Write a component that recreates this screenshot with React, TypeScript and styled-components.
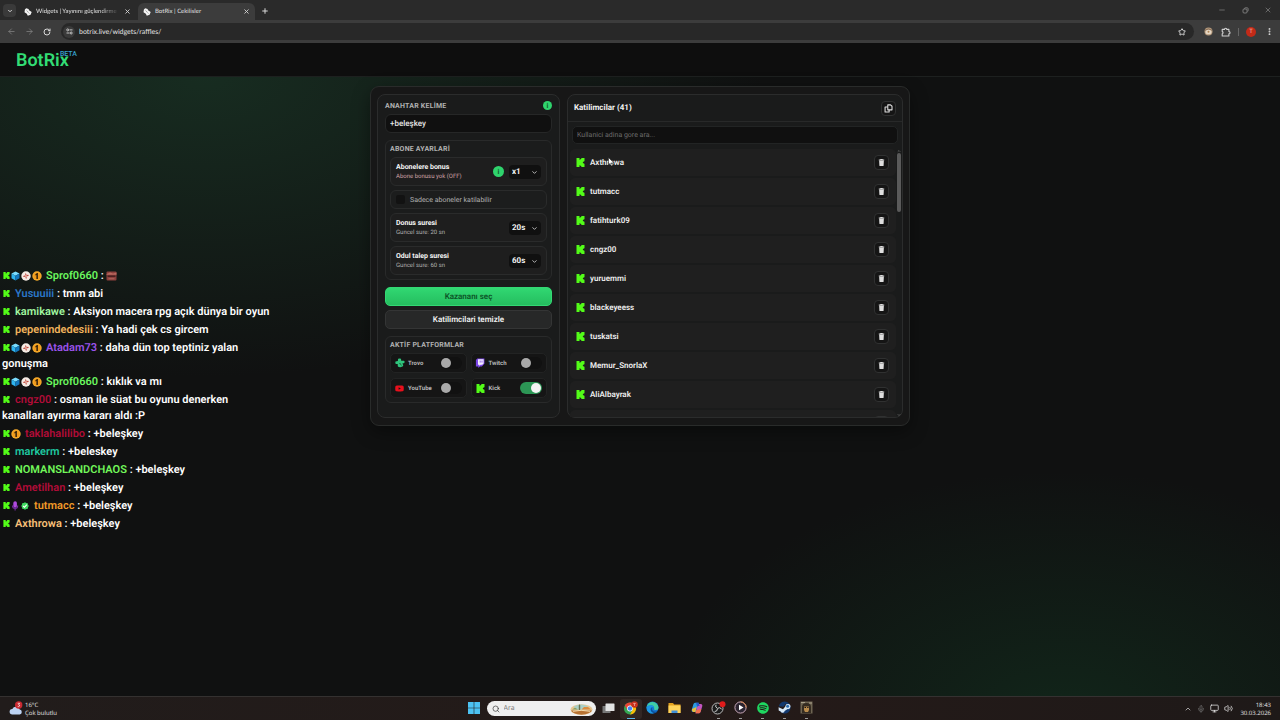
import React from "react";
import styled, { createGlobalStyle, css } from "styled-components";
import {
  ArrowLeft, ArrowRight, RotateCw, Star, EllipsisVertical, X, Plus, Minus,
  ChevronDown, ChevronUp, Search, Monitor, Volume2, Mic,
} from "lucide-react";
import { FaSpotify, FaYoutube } from "react-icons/fa";

const GlobalStyle = createGlobalStyle`
  * { box-sizing: border-box; }
  body {
    margin: 0;
    background: #0f0f0f;
    color: #ececec;
    font-family: Roboto, "Liberation Sans", sans-serif;
    text-rendering: geometricPrecision;
  }
  button, input, select { font-family: inherit; text-rendering: inherit; }
  svg { display: block; flex: none; }
`;

const Screen = styled.div`
  min-height: 100vh;
  display: flex;
  flex-direction: column;
  overflow: hidden;
`;

const iconButton = css`
  display: flex;
  align-items: center;
  justify-content: center;
  padding: 0;
  border: 0;
  background: none;
  color: inherit;
`;

/* ---------- Browser ---------- */

const Browser = styled.header`
  font-family: Lato, "Open Sans", sans-serif;
  background: #2a2a2a;
  color: #d8d8d8;
`;

const TabStrip = styled.div`
  display: flex;
  align-items: flex-end;
  height: 20px;
  padding-left: 3px;
`;

const TabSearch = styled.button`
  ${iconButton}
  width: 13px;
  height: 13px;
  margin-bottom: 3px;
  border-radius: 4px;
  background: #3a3a3a;
`;

const Tab = styled.div<{ $active?: boolean }>`
  display: flex;
  align-items: center;
  gap: 4px;
  width: 117px;
  height: 17px;
  padding: 0 5px;
  border-radius: 6px 6px 0 0;
  background: ${(p) => (p.$active ? "#3c3c3c" : "transparent")};
  margin-left: ${(p) => (p.$active ? "2px" : "3px")};
`;

const TabTitle = styled.span<{ $fade?: boolean }>`
  flex: 1;
  overflow: hidden;
  white-space: nowrap;
  font-size: 6px;
  font-weight: 500;
  line-height: 12px;
  ${(p) => p.$fade && "mask-image: linear-gradient(90deg, #000 75%, transparent);"}
`;

const PlainButton = styled.button<{ $size?: number; $dim?: boolean }>`
  ${iconButton}
  width: ${(p) => p.$size ?? 12}px;
  height: ${(p) => p.$size ?? 12}px;
  opacity: ${(p) => (p.$dim ? 0.45 : 1)};
`;

const NewTab = styled(PlainButton)`
  margin: 0 0 3px 4px;
`;

const WindowControls = styled.div`
  display: flex;
  align-self: center;
  gap: 11px;
  margin-left: auto;
  padding-right: 6px;
  color: #8a8a8a;
`;

const Toolbar = styled.div`
  display: flex;
  align-items: center;
  gap: 6px;
  height: 23px;
  padding: 0 5px;
  background: #3c3c3c;
`;

const AddressBar = styled.form`
  flex: 1;
  display: flex;
  align-items: center;
  gap: 4px;
  height: 17px;
  margin: 0 2px;
  padding: 0 6px 0 2px;
  border-radius: 9px;
  background: #282828;
`;

const SiteInfo = styled(PlainButton)`
  border-radius: 50%;
  background: #3a3a3a;
`;

const Address = styled.input`
  flex: 1;
  padding: 0;
  border: 0;
  background: none;
  color: #e2e2e2;
  font-size: 7px;
  line-height: 12px;
  outline: 0;
`;

const ToolbarRule = styled.span`
  width: 1px;
  height: 8px;
  background: #666;
`;

const Avatar = styled.button`
  ${iconButton}
  width: 10px;
  height: 10px;
  margin: 0 1px;
  border-radius: 50%;
  background: #c32a18;
  color: #f0b0a0;
  font-size: 6px;
`;

/* ---------- Site ---------- */

const SiteHeader = styled.div`
  height: 34px;
  padding: 7px 16px 0;
  border-bottom: 1px solid #1d201f;
  background: #0e0e0e;
`;

const Brand = styled.a`
  display: inline-flex;
  align-items: flex-start;
  color: #32dc74;
  font-size: 18px;
  font-weight: 600;
  line-height: 22px;
  text-decoration: none;
`;

const Beta = styled.sup`
  margin-left: -9px;
  color: #36a0cc;
  font-size: 7px;
  font-weight: 500;
  line-height: 8px;
`;

const Main = styled.main`
  flex: 1;
  display: grid;
  grid-template-columns: 1fr 540px 1fr;
  align-items: start;
  padding-top: 9px;
  background:
    radial-gradient(ellipse 560px 300px at 16% 0%, rgba(36, 92, 60, 0.36), transparent),
    radial-gradient(ellipse 400px 250px at 83% 104%, rgba(20, 84, 46, 0.3), transparent),
    #101111;
`;

const Chat = styled.ul`
  display: flex;
  flex-direction: column;
  gap: 2px;
  width: 270px;
  margin: 182px 0 0 2px;
  padding: 0;
  list-style: none;
  font-size: 11px;
  font-weight: 600;
  line-height: 16px;
  color: #fff;
`;

const ChatIcons = styled.span<{ $gap: number }>`
  display: inline-flex;
  align-items: center;
  gap: 1px;
  height: 10px;
  padding-left: 1px;
  margin-right: ${(p) => p.$gap}px;
  vertical-align: 0;
`;

const Nick = styled.span<{ $color: string }>`
  color: ${(p) => p.$color};
`;

const Emote = styled.span`
  display: inline-block;
  vertical-align: -2px;
`;

const Panel = styled.section`
  display: grid;
  grid-template-columns: 183px 1fr;
  gap: 7px;
  padding: 7px 6px;
  border: 1px solid #292b2a;
  border-radius: 9px;
  background: #171717;
  box-shadow: 0 6px 18px rgba(0, 0, 0, 0.4);
`;

const Card = styled.div`
  display: flex;
  flex-direction: column;
  min-width: 0;
  border: 1px solid #2b2c2c;
  border-radius: 8px;
  background: #1a1b1b;
`;

const Settings = styled(Card)`
  padding: 5px 7px 14px;
`;

const LabelRow = styled.div`
  display: flex;
  align-items: center;
  justify-content: space-between;
  height: 11px;
`;

const caption = css`
  color: #b0b0b0;
  font-size: 7px;
  font-weight: 700;
  line-height: 10px;
  letter-spacing: 0.03em;
`;

const FieldLabel = styled.label`
  ${caption}
`;

const InfoButton = styled.button<{ $size: number }>`
  ${iconButton}
  width: ${(p) => p.$size}px;
  height: ${(p) => p.$size}px;
  border-radius: 50%;
  background: #2fd46d;
  color: #0f5a2c;
  font-size: 7px;
  font-weight: 700;
`;

const Keyword = styled.input`
  width: 100%;
  height: 19px;
  margin-top: 3px;
  padding: 0 4px;
  border: 1px solid #262727;
  border-radius: 6px;
  background: #101010;
  color: #e4e4e4;
  font-size: 8px;
  font-weight: 500;
`;

const Group = styled.section`
  display: flex;
  flex-direction: column;
  gap: 4px;
  margin-top: 7px;
  padding: 3px 4px 4px;
  border: 1px solid #292a2a;
  border-radius: 6px;
  background: #1b1c1c;
`;

const GroupTitle = styled.h2`
  ${caption}
  margin: 0 0 -1px;
`;

const SettingRow = styled.div`
  display: flex;
  align-items: center;
  gap: 5px;
  height: 29px;
  padding: 0 5px;
  border: 1px solid #2a2b2b;
  border-radius: 6px;
  background: #1e1e1e;
`;

const SettingText = styled.div`
  flex: 1;
  display: flex;
  flex-direction: column;
`;

const SettingName = styled.label`
  color: #f4f4f4;
  font-size: 7px;
  font-weight: 700;
  line-height: 9px;
`;

const SettingNote = styled.span<{ $warn?: boolean }>`
  color: ${(p) => (p.$warn ? "#d0a4a8" : "#b0b0b0")};
  font-size: 6px;
  line-height: 9px;
`;

const SelectBox = styled.div`
  position: relative;
  width: 32px;
  height: 14px;
  svg {
    position: absolute;
    top: 4px;
    right: 3px;
    pointer-events: none;
  }
`;

const Select = styled.select`
  appearance: none;
  display: block;
  width: 100%;
  height: 100%;
  padding: 0 3px;
  border: 0;
  border-radius: 4px;
  background: #101010;
  color: #f2f2f2;
  font-size: 8px;
  font-weight: 700;
`;

const OnlySubs = styled.label`
  display: flex;
  align-items: center;
  gap: 5px;
  height: 19px;
  padding: 0 5px;
  border: 1px solid #2a2b2b;
  border-radius: 6px;
  background: #1c1d1d;
  color: #b0b0b0;
  font-size: 7px;
`;

const Tick = styled.input`
  appearance: none;
  width: 9px;
  height: 9px;
  margin: 0;
  border-radius: 2px;
  background: #121212;
`;

const ActionButton = styled.button<{ $primary?: boolean }>`
  height: 19px;
  margin-top: ${(p) => (p.$primary ? "7px" : "4px")};
  padding: 0;
  border: 1px solid ${(p) => (p.$primary ? "#33d873" : "#343535")};
  border-radius: 5px;
  background: ${(p) => (p.$primary ? "linear-gradient(#31d872, #25bd5f)" : "#272828")};
  color: ${(p) => (p.$primary ? "#0b5226" : "#f0f0f0")};
  font-size: 8px;
  font-weight: 600;
`;

const Platforms = styled.div`
  display: grid;
  grid-template-columns: 1fr 1fr;
  gap: 5px 4px;
`;

const Platform = styled.label`
  display: flex;
  align-items: center;
  gap: 4px;
  height: 20px;
  padding: 0 4px;
  border: 1px solid #222323;
  border-radius: 5px;
  background: #151515;
  color: #b8b8b8;
  font-size: 6px;
  font-weight: 700;
`;

const PlatformIcon = styled.span`
  display: flex;
  justify-content: center;
  width: 9px;
`;

const Switch = styled.input`
  appearance: none;
  display: flex;
  align-items: center;
  width: 22px;
  height: 12px;
  margin: 0 0 0 auto;
  padding: 0 1px;
  border-radius: 6px;
  background: #111;
  &::before {
    content: "";
    width: 10px;
    height: 10px;
    border-radius: 50%;
    background: #a9a9a9;
  }
  &:checked {
    justify-content: flex-end;
    background: #2c9655;
  }
  &:checked::before {
    background: #f4f4f4;
  }
`;

const ListHeader = styled.div`
  display: flex;
  align-items: center;
  justify-content: space-between;
  height: 27px;
  padding: 0 6px;
  border-bottom: 1px solid #282929;
`;

const ListTitle = styled.h2`
  margin: 0;
  color: #f2f2f2;
  font-size: 8px;
  font-weight: 700;
  line-height: 12px;
`;

const SquareButton = styled.button`
  ${iconButton}
  width: 15px;
  height: 15px;
  border: 1px solid #303131;
  border-radius: 4px;
  background: #151515;
  color: #dedede;
`;

const SearchField = styled.input`
  height: 18px;
  margin: 4px 4px 5px;
  padding: 0 4px;
  border: 1px solid #222424;
  border-radius: 5px;
  background: #101010;
  color: #ddd;
  font-size: 7px;
  &::placeholder { color: #6c6c6c; }
`;

const ListArea = styled.div`
  flex: 1 1 0;
  display: flex;
  min-height: 0;
  overflow: hidden;
`;

const Participants = styled.ul`
  flex: 1;
  display: flex;
  flex-direction: column;
  gap: 2px;
  margin: 0;
  padding: 0 0 0 2px;
  list-style: none;
`;

const Participant = styled.li`
  position: relative;
  flex: none;
  display: flex;
  align-items: center;
  gap: 5px;
  height: 27px;
  padding: 0 7px 0 6px;
  border-radius: 5px;
  background: #1f1f1f;
`;

const Name = styled.span`
  flex: 1;
  color: #eee;
  font-size: 8px;
  font-weight: 600;
`;

const Pointer = styled.svg`
  position: absolute;
  top: 8px;
  left: 38px;
`;

const ScrollTrack = styled.div`
  display: flex;
  flex-direction: column;
  align-items: center;
  justify-content: space-between;
  width: 6px;
  color: #777;
`;

const ScrollTop = styled.div`
  display: flex;
  flex-direction: column;
  align-items: center;
`;

const Thumb = styled.div`
  width: 4px;
  height: 59px;
  border-radius: 2px;
  background: #5a5a5a;
`;

/* ---------- Taskbar ---------- */

const Taskbar = styled.footer`
  display: grid;
  grid-template-columns: 1fr auto 1fr;
  align-items: center;
  height: 24px;
  padding: 0 9px;
  border-top: 1px solid #343130;
  background: linear-gradient(90deg, #211c1b, #241a18 60%, #1e1918);
  font-family: "Open Sans", "Noto Sans", sans-serif;
  font-size: 6px;
  line-height: 8px;
  color: #e6e6e6;
`;

const Weather = styled.button`
  ${iconButton}
  justify-self: start;
  gap: 2px;
  text-align: left;
  font-size: 6px;
  line-height: 8px;
`;

const Apps = styled.div`
  display: flex;
  align-items: center;
`;

const AppButton = styled.button<{ $state?: "open" | "active" }>`
  ${iconButton}
  width: 22px;
  height: 20px;
  border-radius: 3px;
  border-bottom: 2px solid transparent;
  background: ${(p) => (p.$state === "active" ? "#322724" : "none")};
  ${(p) =>
    p.$state &&
    css`
      background-image: linear-gradient(
        ${p.$state === "active" ? "#5ab4e6, #5ab4e6" : "#9a9a9a, #9a9a9a"}
      );
      background-repeat: no-repeat;
      background-size: ${p.$state === "active" ? "8px" : "3px"} 1px;
      background-position: 50% 100%;
      background-origin: border-box;
    `}
`;

const TaskSearch = styled.label`
  display: flex;
  align-items: center;
  gap: 4px;
  width: 109px;
  height: 15px;
  margin: 0 2px;
  padding: 0 3px 0 5px;
  border-radius: 8px;
  background: #efefef;
  color: #333;
`;

const TaskSearchInput = styled.input`
  flex: 1;
  min-width: 0;
  padding: 0;
  border: 0;
  background: none;
  font-size: 7px;
  &::placeholder { color: #777; }
`;

const Tray = styled.div`
  justify-self: end;
  display: flex;
  align-items: center;
  gap: 5px;
`;

const Clock = styled.time`
  margin-left: 2px;
  text-align: right;
`;

/* ---------- Drawings ---------- */

const KickMark = ({ size }: { size: number }) => (
  <svg width={size} height={size} viewBox="0 0 9 9" fill="#53fc18">
    <path d="M.500 0h3v1.800h.900V.900h.900V0h3.200v3.200h-.900v.8h-.7v1h.7v.8h.9V9H5.300v-.900h-.9v-.900h-.9V9h-3z" />
  </svg>
);

const Favicon = () => (
  <svg width="8" height="8" viewBox="0 0 8 8">
    <path d="M2.200.3 4.600.9 5 2.200 7.700 4 6.600 6.800 3.800 7.700 2.800 5.800.5 4.300.9 1.500z" fill="#f4f4f4" />
    <path d="m2.800 2.700.9.900M4.500 4.600l.7.700" stroke="#2a2a2a" strokeWidth=".7" />
  </svg>
);

const TuneIcon = () => (
  <svg width="7" height="7" viewBox="0 0 7 7" fill="none" stroke="#d0d0d0" strokeWidth=".9">
    <circle cx="1.700" cy="1.900" r="1" />
    <path d="M3.500 1.900h3M.5 5h3" />
    <circle cx="5.200" cy="5" r="1" />
  </svg>
);

const RestoreIcon = () => (
  <svg width="7" height="7" viewBox="0 0 7 7" fill="none" stroke="currentColor" strokeWidth=".8">
    <rect x="1" y="2" width="4" height="4" rx="1" />
    <path d="M2.500 1.800V1.500q0-.7.700-.7h2q.9 0 .9.900v2q0 .7-.6.700" />
  </svg>
);

const PuzzleIcon = () => (
  <svg width="10" height="10" viewBox="0 0 10 10" fill="none" stroke="#d0d0d0" strokeWidth="1.100" strokeLinejoin="round">
    <path d="M1.200 2.400h2.300a1.150 1.150 0 0 1 2.300 0h2.100v2.100a1.150 1.150 0 0 1 0 2.300v2.200H1.200V6.900a1.200 1.200 0 0 0 0-2.300z" />
  </svg>
);

const CopyIcon = () => (
  <svg width="9" height="9" viewBox="0 0 10 10" fill="none" stroke="currentColor" strokeWidth="1.200" strokeLinejoin="round">
    <path d="M4.200 1h3l1.700 1.500v4H4.200z" />
    <path d="M4.200 3.300H1.200v5.500h4.500V6.500" />
  </svg>
);

const TrashIcon = () => (
  <svg width="7" height="7" viewBox="0 0 7 8" fill="#dedede">
    <path d="M2.300 0h2.400l.4.700h1.500v1.100H.4V.7h1.500zM.8 2h5.400l-.3 5.400q0 .6-.6.600H1.700q-.6 0-.6-.6z" />
  </svg>
);

const Extension = () => (
  <svg width="9" height="9" viewBox="0 0 9 9">
    <circle cx="4.500" cy="4.500" r="4" fill="#b59a7c" />
    <ellipse cx="4.500" cy="5" rx="3" ry="2.300" fill="#e6d8c6" />
    <circle cx="4.500" cy="4.800" r="1" fill="#b08858" />
    <path d="M1 3.200q3.500-2.600 7 0" stroke="#7d6450" strokeWidth=".8" fill="none" />
  </svg>
);

const CubeBadge = () => (
  <svg width="9" height="10" viewBox="0 0 9 10">
    <path d="M4.500.5 8.500 2.500 4.500 4.700.5 2.500z" fill="#7adcff" />
    <path d="M.5 2.500 4.500 4.700v4.800L.5 7.300z" fill="#2fb4f0" />
    <path d="M8.500 2.500 4.500 4.700v4.800l4-2.200z" fill="#1278c0" />
  </svg>
);

const SpinBadge = () => (
  <svg width="10" height="10" viewBox="0 0 10 10">
    <circle cx="5" cy="5" r="4.700" fill="#f5ebe4" />
    <path d="M5 5Q3.500 3.500 4.600 2q1.600.8.400 3 1.500-1.800 2.800-1Q7.500 5.800 5 5q1.400 1.600.2 3Q3.800 7 5 5 3.200 6.600 2 5.500 3 3.900 5 5" fill="#c4483c" />
  </svg>
);

const FirstBadge = () => (
  <svg width="10" height="10" viewBox="0 0 10 10">
    <circle cx="5" cy="5" r="4.700" fill="#f8ac2c" />
    <circle cx="5" cy="5" r="3.500" fill="#ef9a1c" />
    <path d="M3.400 3.200 5 2h.9v6H4.400V4l-1 .6z" fill="#33200a" />
  </svg>
);

const MicBadge = () => (
  <svg width="8" height="10" viewBox="0 0 8 10">
    <rect x="2.300" y=".3" width="3.600" height="6.400" rx="1.800" fill="#b04ae0" />
    <path d="M1.500 4.500q0 3 2.600 3t2.600-3M4.100 7.500v2" stroke="#7a2aa8" strokeWidth="1.100" fill="none" />
  </svg>
);

const CheckBadge = () => (
  <svg width="10" height="10" viewBox="0 0 10 10">
    <path d="m5 1.200 1.300.8 1.500.2.200 1.500.8 1.300-.8 1.300-.2 1.500-1.500.2L5 8.800 3.700 8l-1.500-.2L2 6.300 1.200 5 2 3.700l.2-1.500L3.700 2z" fill="#3fd860" />
    <path d="m3.200 5 1.300 1.300 2.300-2.600" stroke="#fff" strokeWidth="1.100" fill="none" />
  </svg>
);

const EmoteArt = () => (
  <svg width="11" height="10" viewBox="0 0 11 10">
    <rect x=".5" y=".5" width="10" height="9" rx="1" fill="#8c3f3c" />
    <path d="M.5 3 4 1.500l3 1 3.500-1V3.700h-10z" fill="#b8685e" />
    <path d="M1.500 4.500h8v1.300h-8z" fill="#3c1a1a" />
    <path d="M2.500 7.800h6" stroke="#b87468" strokeWidth=".8" />
  </svg>
);

const TrovoMark = () => (
  <svg width="10" height="10" viewBox="0 0 10 10">
    <path d="M3 1.200Q3.200.3 4.200.4L6 .7l.2 2 2.700.1q.9.200.7 1.100l-.3 1.200-1.900.4.8 1.600q.2.900-.6 1.300l-2.300.8-1.600-.1-.9-.9-.1-2.100-1.700-.1Q.300 5.700.3 4.800l.2-1.400 2.400-.3z" fill="#2fc47c" />
    <path d="M4 5.600h1.500l.1 1.200q.5.800 1.200.2" stroke="#124a30" strokeWidth=".6" fill="none" />
  </svg>
);

const TwitchMark = () => (
  <svg width="10" height="10" viewBox="0 0 10 10">
    <path d="M2.400.4h7v5.400L6.800 8.400H5L3.300 10V8.400H.9V2z" fill="#7b45e8" />
    <path d="M3 1.200h5.600v4.200L7.200 6.800H5.500L4.300 8V6.800H3z" fill="#f2ecff" />
    <path d="M5.200 2.600v2M7 2.600v2" stroke="#7b45e8" strokeWidth=".8" />
  </svg>
);

const WindowsMark = () => (
  <svg width="12" height="12" viewBox="0 0 12 12" fill="#4cc2f2">
    <path d="M0 0h5.700v5.700H0zM6.300 0H12v5.700H6.300zM0 6.300h5.700V12H0zM6.300 6.300H12V12H6.300z" />
  </svg>
);

const Scenery = () => (
  <svg width="23" height="12" viewBox="0 0 23 12">
    <ellipse cx="11.500" cy="6.500" rx="11" ry="5.300" fill="#e6c794" />
    <path d="M4 3.500q7-4 14 0l-1 3H5z" fill="#a9cfc6" />
    <path d="M8.800 7V2.500l.7-1.500.7 1.500V7z" fill="#66704c" />
    <path d="M11.500 6.500 14 4h4l3 2.500z" fill="#dd8b3d" />
    <path d="M2 6.500 5 4.800l3 1.700z" fill="#8d9a56" />
    <path d="M1 7.500h21q-2 3.600-10.500 4.200Q3.500 11.500 1 7.500" fill="#b87232" />
    <path d="M3 8.300q8-2 17 0" stroke="#f4dcae" fill="none" />
  </svg>
);

const TaskView = () => (
  <svg width="13" height="12" viewBox="0 0 13 12">
    <rect x=".5" y="4" width="8" height="7" rx=".5" fill="#777" />
    <rect x="3.500" y="1.500" width="9" height="7.500" rx=".5" fill="#e2e2e2" />
  </svg>
);

const ChromeMark = () => (
  <svg width="15" height="14" viewBox="0 0 15 14">
    <circle cx="7" cy="7.500" r="6" fill="#34a853" />
    <path d="M1.800 4.500a6 6 0 0 1 10.400 0H7L4.400 9z" fill="#ea4335" />
    <path d="M12.200 4.500A6 6 0 0 1 7 13.500L9.600 9 7 4.500z" fill="#fbbc05" />
    <circle cx="7" cy="7.500" r="2.900" fill="#fff" />
    <circle cx="7" cy="7.500" r="2.200" fill="#4285f4" />
    <circle cx="11.500" cy="3.500" r="3.300" fill="#c8301e" />
    <path d="M10.200 2.400h2.600M11.500 2.400v2.600" stroke="#f0b8a8" strokeWidth=".7" />
  </svg>
);

const EdgeMark = () => (
  <svg width="13" height="13" viewBox="0 0 13 13">
    <circle cx="6.500" cy="6.500" r="6" fill="#1477cf" />
    <path d="M.6 6A6 6 0 0 1 12.500 6.500Q12.500 9 9.800 9 7.500 9 8.200 7.200 8 4.300 5 4.300 2 4.300.6 6" fill="#40cda4" />
    <path d="M.6 6Q2 3.800 5 4.300q3.200.5 3.200 2.900-.7-1.400-2.200-1.200Q4 6.600 4.500 9q.7 2.500 3.400 3.300Q3 13.300 1 9.400.4 7.700.6 6" fill="#1c98e4" />
    <path d="M6 6.500q-1 2 1 3.600 2 1.200 4.500.2Q9.800 12.800 7.500 12 4.500 11 4.800 8.300 5 6.900 6 6.500" fill="#0c4f99" />
  </svg>
);

const FolderMark = () => (
  <svg width="13" height="12" viewBox="0 0 13 12">
    <path d="M.5 1h4.500l1.200 1.500h6.300V11H.5z" fill="#e3a11f" />
    <path d="M.5 3.500h12V11H.5z" fill="#ffd45c" />
    <path d="M3.500 8.500h6V11h-6z" fill="#3f8fd8" />
  </svg>
);

const CopilotMark = () => (
  <svg width="12" height="12" viewBox="0 0 12 12">
    <path d="M4 .8h3.600L6 6.500 4.700 10H2.200Q.2 10 .8 7.500L2.300 2.500Q2.800.8 4 .8" fill="#2d9be0" />
    <path d="M1 7 5.500 5l-1 5H2.200Q.5 9.500 1 7" fill="#e8bd3c" />
    <path d="M7.500 2h2.300q2 .1 1.400 2.500L9.700 9.400Q9.200 11.200 8 11.200H4.500L6 5.500z" fill="#c455c0" />
    <path d="m5.300 8 5-1-.8 2.700Q9 11.200 8 11.200H4.500z" fill="#f0704c" />
    <path d="M5 .8h2.600L8.600 4H6z" fill="#2858c8" />
  </svg>
);

const ObsMark = () => (
  <svg width="15" height="14" viewBox="0 0 15 14">
    <circle cx="6.500" cy="7.500" r="5.500" fill="#1b1b1b" stroke="#c8c8c8" strokeWidth=".9" />
    <g fill="none" stroke="#d0d0d0" strokeWidth="1">
      <path d="M6.300 7.300Q3.800 6.300 5 3.700M6.600 7.300q2.300-1.600 4 .7M6.500 7.600q0 2.900-2.900 3" />
    </g>
    <circle cx="11.500" cy="3.300" r="3" fill="#e01b1b" />
  </svg>
);

const PlayerMark = () => (
  <svg width="13" height="13" viewBox="0 0 13 13">
    <circle cx="6.500" cy="6.500" r="5.600" fill="#2b2430" stroke="#c8a8b8" strokeWidth="1" />
    <path d="M6.500.9A5.600 5.600 0 0 1 12.100 6.500" stroke="#e08a4c" fill="none" />
    <path d="M5 3.800v5.400l4.500-2.700z" fill="#fff" />
  </svg>
);

const SteamMark = () => (
  <svg width="13" height="13" viewBox="0 0 13 13">
    <path d="M.7 5.200A6 6 0 1 1 1.200 9.300L4 10.200l3-1.700 3-2.400-2-3.500-2.600 3.200z" fill="#12386e" />
    <path d="M.6 6.300 5 8.200 7.300 5.400a2.600 2.600 0 1 1 2.300 2.700L6.600 10a2 2 0 0 1-3.900.4L.7 9.400z" fill="#d6e8f8" />
    <circle cx="9.600" cy="5.200" r="1.500" fill="#2a6cb0" />
  </svg>
);

const GameMark = () => (
  <svg width="13" height="13" viewBox="0 0 13 13">
    <rect x=".5" y=".5" width="12" height="12" fill="#6e6552" />
    <path d="M2 12V6q0-4 4.500-4T11 6v6z" fill="#352c22" />
    <path d="M4 5.500h5v3.500l-1 2H5l-1-2z" fill="#b98b4c" />
    <path d="M4.500 6.500h1.500M7.200 6.500h1.300" stroke="#1a1410" />
    <path d="M1 1.500h4M9 2h3" stroke="#a9a08a" />
  </svg>
);

const CloudMark = () => (
  <svg width="14" height="15" viewBox="0 0 14 15">
    <path d="M3.500 13.500a2.800 2.800 0 0 1-.2-5.600 4 4 0 0 1 7.400.5 2.600 2.600 0 0 1 0 5.100z" fill="#bcd2f2" />
    <circle cx="9.700" cy="4" r="3.700" fill="#c92a32" />
    <path d="M8.700 2.300h2L9.600 3.700q1.300.1 1 1.300-.6 1-1.900.4" stroke="#fff" strokeWidth=".7" fill="none" />
  </svg>
);

/* ---------- Data ---------- */

type Message = { nick: string; color: string; text?: string; badges?: React.ReactNode };

const regular = (<><CubeBadge /><SpinBadge /><FirstBadge /></>);

const messages: Message[] = [
  { nick: "Sprof0660", color: "#6bf75f", badges: regular },
  { nick: "Yusuuiii", color: "#2b77c9", text: "tmm abi" },
  { nick: "kamikawe", color: "#a0f5a0", text: "Aksiyon macera rpg açık dünya bir oyun" },
  { nick: "pepenindedesiii", color: "#f2b35c", text: "Ya hadi çek cs gircem" },
  { nick: "Atadam73", color: "#9a52ea", text: "daha dün top teptiniz yalan gonuşma", badges: regular },
  { nick: "Sprof0660", color: "#6bf75f", text: "kıklık va mı", badges: regular },
  { nick: "cngz00", color: "#b00c38", text: "osman ile süat bu oyunu denerken kanalları ayırma kararı aldı :P" },
  { nick: "taklahalilibo", color: "#b00c38", text: "+beleşkey", badges: <FirstBadge /> },
  { nick: "markerm", color: "#1fc8a0", text: "+beleskey" },
  { nick: "NOMANSLANDCHAOS", color: "#72f75a", text: "+beleşkey" },
  { nick: "Ametilhan", color: "#b00c38", text: "+beleşkey" },
  { nick: "tutmacc", color: "#f09a28", text: "+beleşkey", badges: (<><MicBadge /><CheckBadge /></>) },
  { nick: "Axthrowa", color: "#f8c078", text: "+beleşkey" },
];

const participants = [
  "Axthrowa", "tutmacc", "fatihturk09", "cngz00", "yuruemmi", "blackeyeess",
  "tuskatsi", "Memur_SnorlaX", "AliAlbayrak", "",
];

const platforms = [
  { name: "Trovo", icon: <TrovoMark />, on: false },
  { name: "Twitch", icon: <TwitchMark />, on: false },
  { name: "YouTube", icon: <FaYoutube size={9} color="#e8101c" />, on: false },
  { name: "Kick", icon: <KickMark size={9} />, on: true },
];

function Dropdown({ id, value }: { id: string; value: string }) {
  return (
    <SelectBox>
      <Select id={id} defaultValue={value}>
        <option>{value}</option>
      </Select>
      <ChevronDown size={7} color="#c8c8c8" strokeWidth={3} />
    </SelectBox>
  );
}

function BrowserChrome() {
  return (
    <Browser>
      <TabStrip>
        <TabSearch aria-label="Sekmelerde ara"><ChevronDown size={6} strokeWidth={4} /></TabSearch>
        <Tab>
          <Favicon />
          <TabTitle $fade>Widgets | Yayınını güçlendirme</TabTitle>
          <PlainButton $size={7} aria-label="Sekmeyi kapat"><X size={7} strokeWidth={3} /></PlainButton>
        </Tab>
        <Tab $active>
          <Favicon />
          <TabTitle>BotRix | Cekilisler</TabTitle>
          <PlainButton $size={7} aria-label="Sekmeyi kapat"><X size={7} strokeWidth={3} /></PlainButton>
        </Tab>
        <NewTab aria-label="Yeni sekme"><Plus size={8} strokeWidth={3} /></NewTab>
        <WindowControls>
          <PlainButton aria-label="Küçült"><Minus size={8} /></PlainButton>
          <PlainButton aria-label="Geri yükle"><RestoreIcon /></PlainButton>
          <PlainButton aria-label="Kapat"><X size={8} /></PlainButton>
        </WindowControls>
      </TabStrip>
      <Toolbar>
        <PlainButton $dim aria-label="Geri"><ArrowLeft size={9} /></PlainButton>
        <PlainButton $dim aria-label="İleri"><ArrowRight size={9} /></PlainButton>
        <PlainButton aria-label="Yenile"><RotateCw size={8} strokeWidth={3} /></PlainButton>
        <AddressBar>
          <SiteInfo type="button" aria-label="Site bilgileri"><TuneIcon /></SiteInfo>
          <Address aria-label="Adres" defaultValue="botrix.live/widgets/raffles/" />
          <PlainButton type="button" aria-label="Yer işareti"><Star size={8} strokeWidth={3} /></PlainButton>
        </AddressBar>
        <PlainButton aria-label="Uzantı"><Extension /></PlainButton>
        <PlainButton aria-label="Uzantılar"><PuzzleIcon /></PlainButton>
        <ToolbarRule />
        <Avatar aria-label="Profil">T</Avatar>
        <PlainButton aria-label="Menü"><EllipsisVertical size={9} strokeWidth={3} /></PlainButton>
      </Toolbar>
    </Browser>
  );
}

function RafflePanel() {
  return (
    <Panel>
      <Settings>
        <LabelRow>
          <FieldLabel htmlFor="keyword">ANAHTAR KELİME</FieldLabel>
          <InfoButton $size={9} aria-label="Bilgi">i</InfoButton>
        </LabelRow>
        <Keyword id="keyword" defaultValue="+beleşkey" />
        <Group>
          <GroupTitle>ABONE AYARLARİ</GroupTitle>
          <SettingRow>
            <SettingText>
              <SettingName htmlFor="bonus">Abonelere bonus</SettingName>
              <SettingNote $warn>Abone bonusu yok (OFF)</SettingNote>
            </SettingText>
            <InfoButton $size={11} aria-label="Bilgi">i</InfoButton>
            <Dropdown id="bonus" value="x1" />
          </SettingRow>
          <OnlySubs><Tick type="checkbox" />Sadece aboneler katilabilir</OnlySubs>
          <SettingRow>
            <SettingText>
              <SettingName htmlFor="spin">Donus suresi</SettingName>
              <SettingNote>Guncel sure: 20 sn</SettingNote>
            </SettingText>
            <Dropdown id="spin" value="20s" />
          </SettingRow>
          <SettingRow>
            <SettingText>
              <SettingName htmlFor="claim">Odul talep suresi</SettingName>
              <SettingNote>Guncel sure: 60 sn</SettingNote>
            </SettingText>
            <Dropdown id="claim" value="60s" />
          </SettingRow>
        </Group>
        <ActionButton $primary>Kazananı seç</ActionButton>
        <ActionButton>Katilimcilari temizle</ActionButton>
        <Group>
          <GroupTitle>AKTİF PLATFORMLAR</GroupTitle>
          <Platforms>
            {platforms.map((p) => (
              <Platform key={p.name}>
                <PlatformIcon>{p.icon}</PlatformIcon>
                {p.name}
                <Switch type="checkbox" role="switch" defaultChecked={p.on} />
              </Platform>
            ))}
          </Platforms>
        </Group>
      </Settings>
      <Card>
        <ListHeader>
          <ListTitle>Katilimcilar (41)</ListTitle>
          <SquareButton aria-label="Kopyala"><CopyIcon /></SquareButton>
        </ListHeader>
        <SearchField type="text" aria-label="Kullanici ara" placeholder="Kullanici adina gore ara..." />
        <ListArea>
          <Participants>
            {participants.map((name, i) => (
              <Participant key={i}>
                {name && <KickMark size={9} />}
                <Name>{name}</Name>
                <SquareButton aria-label="Sil"><TrashIcon /></SquareButton>
                {i === 0 && (
                  <Pointer width="7" height="10" viewBox="0 0 7 10">
                    <path d="M.5.5v7.300l1.700-1.500 1.200 2.800 1.200-.5-1.200-2.700h2.400z" fill="#fff" stroke="#111" strokeWidth=".5" />
                  </Pointer>
                )}
              </Participant>
            ))}
          </Participants>
          <ScrollTrack>
            <ScrollTop><ChevronUp size={4} strokeWidth={4} /><Thumb /></ScrollTop>
            <ChevronDown size={4} strokeWidth={4} />
          </ScrollTrack>
        </ListArea>
      </Card>
    </Panel>
  );
}

export default function App() {
  return (
    <Screen>
      <GlobalStyle />
      <BrowserChrome />
      <SiteHeader>
        <Brand href="#">BotRix<Beta>BETA</Beta></Brand>
      </SiteHeader>
      <Main>
        <Chat>
          {messages.map((m, i) => (
            <li key={i}>
              <ChatIcons $gap={m.badges ? 4 : 5}><KickMark size={7} />{m.badges}</ChatIcons>
              <Nick $color={m.color}>{m.nick}</Nick> : {m.text ?? <Emote><EmoteArt /></Emote>}
            </li>
          ))}
        </Chat>
        <RafflePanel />
      </Main>
      <Taskbar>
        <Weather>
          <CloudMark />
          <span>16°C<br />Çok bulutlu</span>
        </Weather>
        <Apps>
          <AppButton aria-label="Başlat"><WindowsMark /></AppButton>
          <TaskSearch>
            <Search size={8} strokeWidth={2} />
            <TaskSearchInput aria-label="Ara" placeholder="Ara" />
            <Scenery />
          </TaskSearch>
          <AppButton aria-label="Görev görünümü"><TaskView /></AppButton>
          <AppButton $state="active" aria-label="Chrome"><ChromeMark /></AppButton>
          <AppButton aria-label="Edge"><EdgeMark /></AppButton>
          <AppButton aria-label="Dosya Gezgini"><FolderMark /></AppButton>
          <AppButton aria-label="Copilot"><CopilotMark /></AppButton>
          <AppButton $state="open" aria-label="OBS"><ObsMark /></AppButton>
          <AppButton $state="open" aria-label="Oynatıcı"><PlayerMark /></AppButton>
          <AppButton $state="open" aria-label="Spotify"><FaSpotify size={12} color="#1ed760" /></AppButton>
          <AppButton $state="open" aria-label="Steam"><SteamMark /></AppButton>
          <AppButton $state="open" aria-label="Oyun"><GameMark /></AppButton>
        </Apps>
        <Tray>
          <ChevronUp size={8} />
          <Mic size={8} color="#777" />
          <Monitor size={9} />
          <Volume2 size={9} />
          <Clock>18:43<br />30.03.2026</Clock>
        </Tray>
      </Taskbar>
    </Screen>
  );
}
